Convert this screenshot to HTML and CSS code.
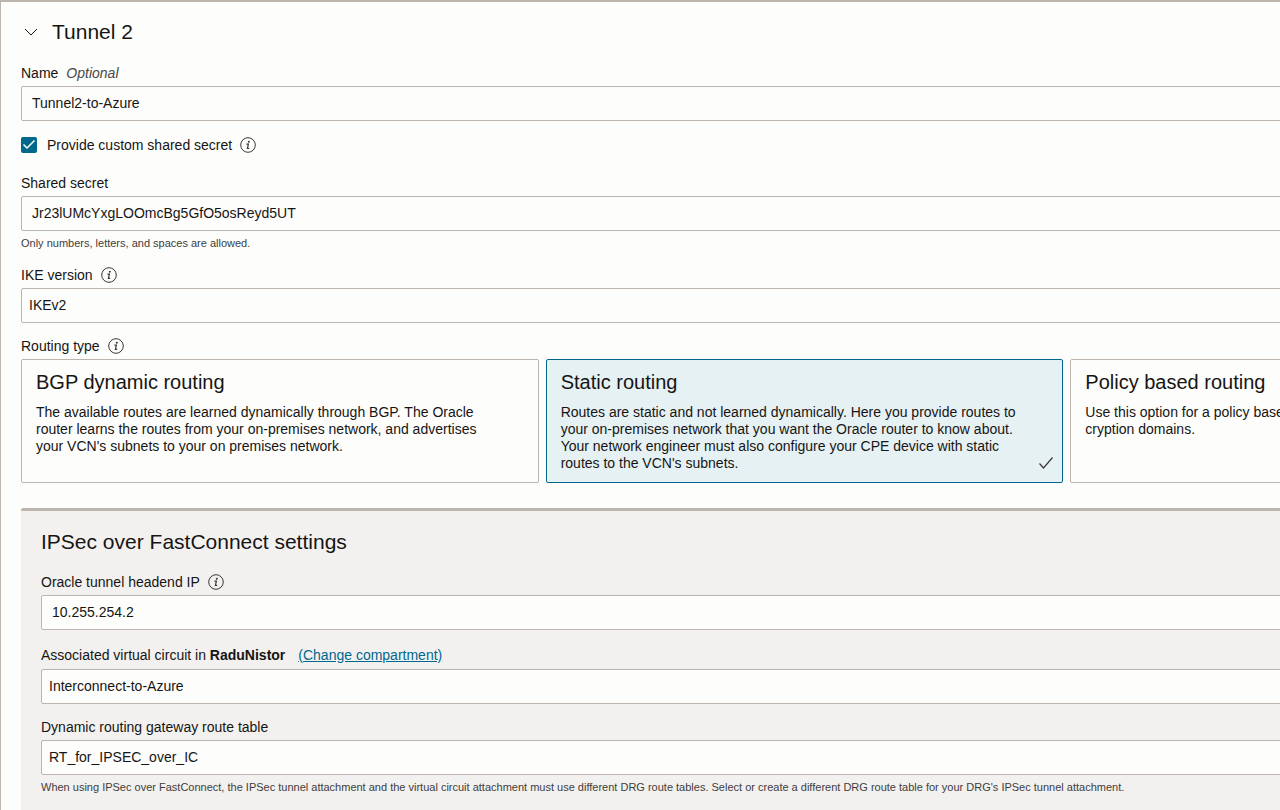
FILE: index.html
```html
<!DOCTYPE html>
<html lang="en">
  <head>
    <meta charset="UTF-8" />
    <meta name="viewport" content="width=device-width, initial-scale=1.0" />
    <title>Create IPSec connection</title>
    <link rel="stylesheet" href="styles.css">
  </head>

  <body>
    <svg class="sprite" aria-hidden="true">
      <symbol id="info" viewBox="0 0 16 16">
        <circle cx="8" cy="8" r="7.3" fill="none" stroke="currentColor" stroke-width="1" />
        <circle cx="8.8" cy="4.7" r="1" fill="currentColor" />
        <path d="M6.4 7.1h2L7.4 11.300h1.800" fill="none" stroke="currentColor" stroke-width="1.2" />
      </symbol>
    </svg>

    <form class="tunnel">
      <h2 class="tunnel-title">
        <button type="button" class="toggle" aria-label="Collapse Tunnel 2">
          <svg width="14" height="8" viewBox="0 0 14 8">
            <path d="M1 1l6 6 6-6" fill="none" stroke="currentColor" />
          </svg>
        </button>
        Tunnel 2
      </h2>

      <div class="field">
        <div class="label-row">
          <label for="name">Name</label>
          <em class="optional">Optional</em>
        </div>
        <input type="text" class="control" id="name" value="Tunnel2-to-Azure" />
      </div>

      <div class="check-row">
        <input type="checkbox" class="checkbox" id="customSecret" checked />
        <label for="customSecret">Provide custom shared secret</label>
        <svg class="info"><use href="#info" /></svg>
      </div>

      <div class="field">
        <div class="label-row">
          <label for="secret">Shared secret</label>
        </div>
        <input type="text" class="control" id="secret" value="Jr23lUMcYxgLOOmcBg5GfO5osReyd5UT" />
        <p class="help">Only numbers, letters, and spaces are allowed.</p>
      </div>

      <div class="field">
        <div class="label-row">
          <label for="ikeVersion">IKE version</label>
          <svg class="info"><use href="#info" /></svg>
        </div>
        <select class="control" id="ikeVersion">
          <option>IKEv2</option>
        </select>
      </div>

      <div class="label-row" id="routingLabel">
        <span>Routing type</span>
        <svg class="info"><use href="#info" /></svg>
      </div>
      <div class="cards" role="radiogroup" aria-labelledby="routingLabel">
        <label class="card">
          <input type="radio" name="routing" class="card-radio" />
          <span class="card-title">BGP dynamic routing</span>
          <span class="card-text">The available routes are learned dynamically through BGP. The Oracle router learns the routes from your on-premises network, and advertises your VCN's subnets to your on premises network.</span>
        </label>
        <label class="card">
          <input type="radio" name="routing" class="card-radio" checked />
          <span class="card-title">Static routing</span>
          <span class="card-text">Routes are static and not learned dynamically. Here you provide routes to your on-premises network that you want the Oracle router to know about. Your network engineer must also configure your CPE device with static routes to the VCN's subnets.</span>
          <svg class="card-check" width="16" height="14" viewBox="0 0 16 14">
            <path d="M1.500 7.500l4 4.500L14.500 1.500" fill="none" stroke="currentColor" stroke-width="1.200" />
          </svg>
        </label>
        <label class="card">
          <input type="radio" name="routing" class="card-radio" />
          <span class="card-title">Policy based routing</span>
          <span class="card-text">Use this option for a policy based VPN with multiple en-<br />cryption domains.</span>
        </label>
      </div>

      <section class="settings">
        <h3 class="settings-title">IPSec over FastConnect settings</h3>

        <div class="field">
          <div class="label-row">
            <label for="headend">Oracle tunnel headend IP</label>
            <svg class="info"><use href="#info" /></svg>
          </div>
          <input type="text" class="control" id="headend" value="10.255.254.2" />
        </div>

        <div class="field">
          <div class="label-row with-link">
            <label for="circuit">Associated virtual circuit in <b>RaduNistor</b></label>
            <a href="#">(Change compartment)</a>
          </div>
          <select class="control" id="circuit">
            <option>Interconnect-to-Azure</option>
          </select>
        </div>

        <div class="field">
          <div class="label-row">
            <label for="routeTable">Dynamic routing gateway route table</label>
          </div>
          <select class="control" id="routeTable">
            <option>RT_for_IPSEC_over_IC</option>
          </select>
          <p class="help">When using IPSec over FastConnect, the IPSec tunnel attachment and the virtual circuit attachment must use different DRG route tables. Select or create a different DRG route table for your DRG's IPSec tunnel attachment.</p>
        </div>
      </section>
    </form>
  </body>
</html>
```

FILE: styles.css
```css
* {
  box-sizing: border-box;
}

html {
  height: 100%;
  overflow: hidden;
}

body {
  margin: 0;
  height: 100%;
  overflow: hidden;
  background-color: #fdfdfc;
  color: #161513;
  font-family: "Liberation Sans", Arial, sans-serif;
  font-size: 14px;
  line-height: 20px;
}

.sprite {
  display: none;
}

/* the form is wider than the window and runs off its right side */
.tunnel {
  margin-right: -328px;
  padding: 16px 20px 0;
  border-top: 2px solid #bbb5ae;
  border-left: 1px solid #bbb5ae;
}

.tunnel-title,
.settings-title {
  margin: 0 0 16px;
  font-size: 21px;
  font-weight: normal;
  line-height: 28px;
}

.tunnel-title {
  display: flex;
  align-items: center;
  gap: 11px;
  margin-bottom: 17px;
}

.toggle {
  display: flex;
  align-items: center;
  justify-content: center;
  width: 20px;
  height: 20px;
  padding: 0;
  border: none;
  background: none;
  color: #161513;
  cursor: pointer;
}

.field {
  margin-bottom: 13px;
}

.label-row {
  display: flex;
  align-items: center;
  gap: 8px;
  margin-bottom: 3px;
}

.with-link {
  gap: 13px;
  height: 23px;
}

.optional {
  color: #4a4846;
}

.info {
  width: 16px;
  height: 16px;
  color: #3a3836;
}

.control {
  display: block;
  width: 100%;
  height: 35px;
  padding: 0 10px 2px;
  border: 1px solid #bbb5ae;
  border-radius: 2px;
  background-color: #fdfdfc;
  color: #161513;
  font: inherit;
}

select.control {
  appearance: none;
  padding: 0 7px 2px;
}

.help {
  margin: 4px 0 0;
  color: #3f3d3b;
  font-size: 11px;
  line-height: 17px;
}

.check-row {
  display: flex;
  align-items: center;
  gap: 8px;
  height: 22px;
  margin-bottom: 17px;
}

.checkbox {
  appearance: none;
  width: 16px;
  height: 16px;
  margin: 0 2px 0 0;
  border-radius: 2px;
  background: #00688c url("data:image/svg+xml,%3Csvg xmlns='http://www.w3.org/2000/svg' viewBox='0 0 16 16'%3E%3Cpath d='M2.5 7.5l3.5 3.5L13.5 3.5' fill='none' stroke='white' stroke-width='1.5'/%3E%3C/svg%3E");
}

.cards {
  display: grid;
  grid-template-columns: repeat(3, 1fr);
  gap: 7px;
  margin-bottom: 25px;
}

.card {
  position: relative;
  min-height: 124px;
  padding: 8px 34px 8px 14px;
  border: 1px solid #bbb5ae;
  border-radius: 2px;
  cursor: pointer;
}

.card:has(:checked) {
  border-color: #00688c;
  background-color: #e6f1f4;
}

.card-radio {
  appearance: none;
  position: absolute;
  inset: 0;
  margin: 0;
}

.card-title {
  display: block;
  margin-bottom: 8px;
  font-size: 20px;
  line-height: 28px;
}

.card-text {
  display: block;
  line-height: 17px;
}

.card-check {
  position: absolute;
  right: 8px;
  bottom: 12px;
  color: #3a3836;
}

.settings {
  padding: 17px 20px 20px;
  border-top: 3px solid #bbb5ae;
  border-radius: 2px 2px 0 0;
  background-color: #f3f1f0;
}

a {
  color: #00688c;
}
```
